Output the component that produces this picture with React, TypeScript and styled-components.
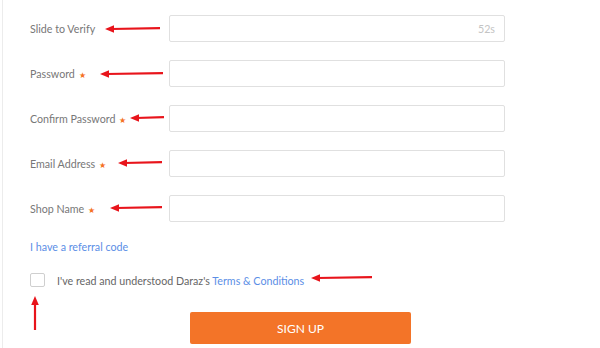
import React from "react";
import styled, { createGlobalStyle } from "styled-components";

const Global = createGlobalStyle`
  html, body { margin: 0; padding: 0; background: #fff; }
  body { font-family: Lato, "Open Sans", "Liberation Sans", sans-serif; }
  * { box-sizing: border-box; }
`;

const Page = styled.div`
  position: relative;
  width: 600px;
  height: 348px;
  overflow: hidden;
  margin-left: 2px;
  border-left: 1px solid #ececec;
  padding: 15px 0 0 27px;
`;

const Row = styled.div`
  display: grid;
  grid-template-columns: 139px 336px;
  align-items: center;
  height: 27px;
  margin-bottom: 18px;
`;

const Label = styled.label`
  font-size: 10.7px;
  color: #777;
  white-space: nowrap;
`;

const Star = styled.span`
  color: #f57224;
  font-size: 8px;
  margin-left: 4px;
  vertical-align: 0px;
`;

const Field = styled.div`
  height: 27px;
  border: 1px solid #e0e0e0;
  border-radius: 2px;
  background: #fff;
  display: flex;
  align-items: center;
  justify-content: flex-end;
  padding-right: 9px;
  font-size: 10.7px;
  color: #c4c4c4;
`;

const Referral = styled.a`
  display: block;
  margin-top: 1px;
  font-size: 10.7px;
  color: #5b8ee6;
  text-decoration: none;
  line-height: 14px;
`;

const AgreeRow = styled.div`
  display: flex;
  align-items: center;
  gap: 12px;
  margin-top: 19px;
  height: 14px;
`;

const Box = styled.span`
  width: 15px;
  height: 14px;
  border: 1px solid #cfcfcf;
  border-radius: 2px;
  background: #fff;
`;

const AgreeText = styled.span`
  font-size: 10.7px;
  color: #666;
`;

const Link = styled.span`
  color: #5b8ee6;
`;

const SignUp = styled.button`
  display: block;
  margin: 25px 0 0 160px;
  width: 221px;
  height: 32px;
  border: none;
  border-radius: 2px;
  background: #f37428;
  color: #fff;
  font-family: Lato, "Open Sans", sans-serif;
  font-size: 12px;
`;

const Overlay = styled.svg`
  position: absolute;
  left: -3px;
  top: 0;
  pointer-events: none;
`;

const hArrows: [number, number, number][] = [
  [105, 160, 29],
  [100, 163, 74],
  [130, 164, 118],
  [118, 162, 163],
  [110, 162, 208],
  [311, 372, 278],
];

const fields = [
  { label: "Slide to Verify", req: false, value: "52s" },
  { label: "Password", req: true },
  { label: "Confirm Password", req: true },
  { label: "Email Address", req: true },
  { label: "Shop Name", req: true },
];

export default function App() {
  return (
    <>
      <Global />
      <Page>
        {fields.map((f) => (
          <Row key={f.label}>
            <Label>
              {f.label}
              {f.req && <Star>★</Star>}
            </Label>
            <Field>{f.value}</Field>
          </Row>
        ))}
        <Referral>I have a referral code</Referral>
        <AgreeRow>
          <Box />
          <AgreeText>
            I've read and understood Daraz's <Link>Terms &amp; Conditions</Link>
          </AgreeText>
        </AgreeRow>
        <SignUp>SIGN UP</SignUp>
        <Overlay width="600" height="348" viewBox="0 0 600 348">
          {hArrows.map(([x1, x2, y], i) => (
            <g key={i} fill="#e8141b" stroke="#e8141b">
              <line x1={x1 + 6} y1={y} x2={x2} y2={y - 0.8} strokeWidth="2.2" />
              <polygon points={`${x1},${y} ${x1 + 9},${y - 3.8} ${x1 + 9},${y + 3.8}`} stroke="none" />
            </g>
          ))}
          <g fill="#e8141b" stroke="#e8141b">
            <line x1="35" y1="302" x2="35" y2="330" strokeWidth="2.2" />
            <polygon points="35,296 31.2,305 38.8,305" stroke="none" />
          </g>
        </Overlay>
      </Page>
    </>
  );
}
